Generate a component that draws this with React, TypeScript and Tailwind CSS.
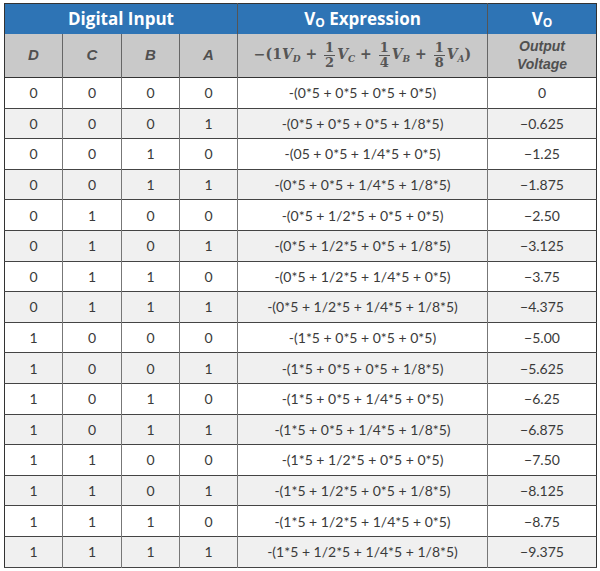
import React from 'react';

const rows: [number, number, number, number, string, string][] = [
  [0, 0, 0, 0, '-(0*5 + 0*5 + 0*5 + 0*5)', '0'],
  [0, 0, 0, 1, '-(0*5 + 0*5 + 0*5 + 1/8*5)', '−0.625'],
  [0, 0, 1, 0, '-(05 + 0*5 + 1/4*5 + 0*5)', '−1.25'],
  [0, 0, 1, 1, '-(0*5 + 0*5 + 1/4*5 + 1/8*5)', '−1.875'],
  [0, 1, 0, 0, '-(0*5 + 1/2*5 + 0*5 + 0*5)', '−2.50'],
  [0, 1, 0, 1, '-(0*5 + 1/2*5 + 0*5 + 1/8*5)', '−3.125'],
  [0, 1, 1, 0, '-(0*5 + 1/2*5 + 1/4*5 + 0*5)', '−3.75'],
  [0, 1, 1, 1, '-(0*5 + 1/2*5 + 1/4*5 + 1/8*5)', '−4.375'],
  [1, 0, 0, 0, '-(1*5 + 0*5 + 0*5 + 0*5)', '−5.00'],
  [1, 0, 0, 1, '-(1*5 + 0*5 + 0*5 + 1/8*5)', '−5.625'],
  [1, 0, 1, 0, '-(1*5 + 0*5 + 1/4*5 + 0*5)', '−6.25'],
  [1, 0, 1, 1, '-(1*5 + 0*5 + 1/4*5 + 1/8*5)', '−6.875'],
  [1, 1, 0, 0, '-(1*5 + 1/2*5 + 0*5 + 0*5)', '−7.50'],
  [1, 1, 0, 1, '-(1*5 + 1/2*5 + 0*5 + 1/8*5)', '−8.125'],
  [1, 1, 1, 0, '-(1*5 + 1/2*5 + 1/4*5 + 0*5)', '−8.75'],
  [1, 1, 1, 1, '-(1*5 + 1/2*5 + 1/4*5 + 1/8*5)', '−9.375'],
];

function Frac({ d }: { d: string }) {
  return (
    <span className="inline-flex flex-col items-center align-middle mx-[2px] text-[13px] leading-[14px]">
      <span className="border-b border-[#555] px-[1px]">1</span>
      <span>{d}</span>
    </span>
  );
}

function V({ s }: { s: string }) {
  return (
    <span className="italic">
      V<sub className="text-[9px]">{s}</sub>
    </span>
  );
}

function Vo() {
  return (
    <span>
      V<span className="text-[12px] relative top-[2px]">O</span>
    </span>
  );
}

export default function App() {
  const cell = 'border-r border-[#777] text-center';
  return (
    <div className="w-[600px] h-[571px] bg-white pt-[3px] pl-[4px]">
      <table
        className="border-collapse border border-[#333] w-[592px] table-fixed text-[#3a3a3a]"
        style={{ fontFamily: 'Lato, "Liberation Sans", sans-serif' }}
      >
        <colgroup>
          <col className="w-[58px]" />
          <col className="w-[59px]" />
          <col className="w-[58px]" />
          <col className="w-[58px]" />
          <col className="w-[250px]" />
          <col className="w-[109px]" />
        </colgroup>
        <thead>
          <tr
            className="h-[30px] bg-[#2e74b5] text-white text-[17px] font-bold"
            style={{ fontFamily: '"Open Sans", sans-serif' }}
          >
            <th colSpan={4} className="border-r border-[#555] font-bold">Digital Input</th>
            <th className="border-r border-[#555] font-bold">
              <Vo /> Expression
            </th>
            <th className="font-bold">
              <Vo />
            </th>
          </tr>
          <tr
            className="h-[44px] bg-[#c9c9c9] text-[#505050] text-[15px] font-bold italic border-b border-[#333]"
            style={{ fontFamily: '"Liberation Sans", Arial, sans-serif' }}
          >
            {['D', 'C', 'B', 'A'].map((l) => (
              <th key={l} className="border-r border-[#666] font-bold">{l}</th>
            ))}
            <th
              className="border-r border-[#666] font-bold not-italic text-[#555] whitespace-nowrap"
              style={{ fontFamily: '"DejaVu Serif", "Liberation Serif", serif' }}
            >
              <span className="text-[14px]">
                −(1<V s="D" /> + <Frac d="2" />
                <V s="C" /> + <Frac d="4" />
                <V s="B" /> + <Frac d="8" />
                <V s="A" />)
              </span>
            </th>
            <th className="font-bold text-[14px] leading-[18px]">
              Output
              <br />
              Voltage
            </th>
          </tr>
        </thead>
        <tbody className="text-[14px]">
          {rows.map((r, i) => (
            <tr
              key={i}
              className={`h-[30.6px] border-b border-[#444] ${i % 2 === 1 ? 'bg-[#f0f0f0]' : 'bg-white'}`}
            >
              <td className={cell}>{r[0]}</td>
              <td className={cell}>{r[1]}</td>
              <td className={cell}>{r[2]}</td>
              <td className={cell}>{r[3]}</td>
              <td className={cell}>{r[4]}</td>
              <td className="text-center">{r[5]}</td>
            </tr>
          ))}
        </tbody>
      </table>
    </div>
  );
}
